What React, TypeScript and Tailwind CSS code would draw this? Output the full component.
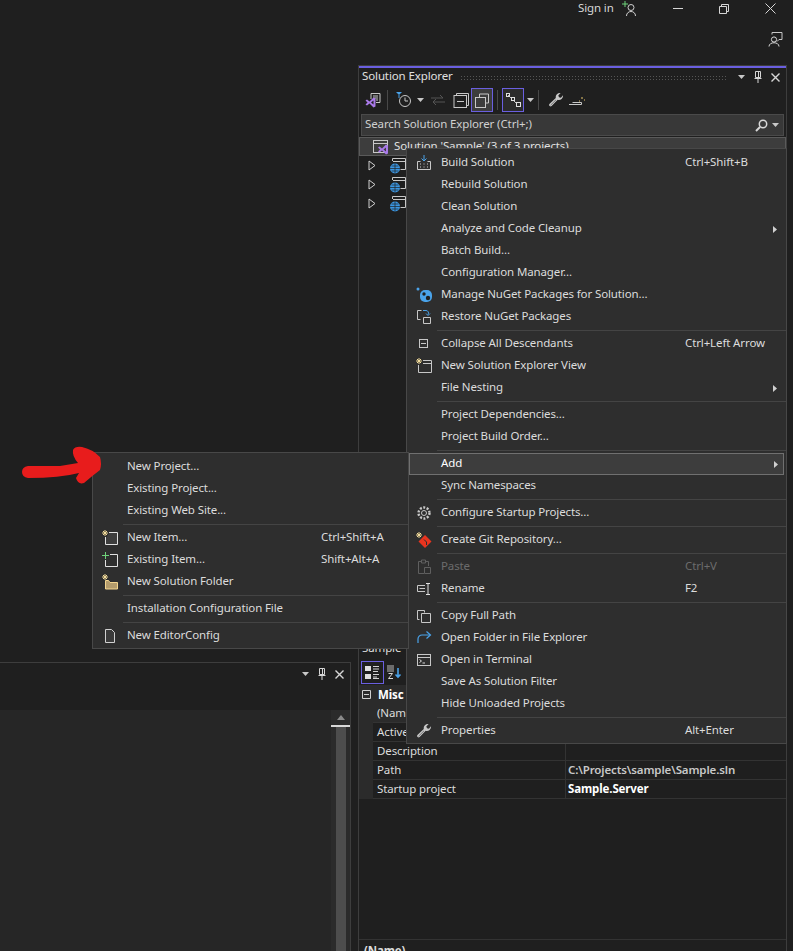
import type { ReactNode } from 'react';

const FONT = "font-['Noto_Sans','Open_Sans',sans-serif]";

type MenuItem =
  | { sep: true }
  | {
      sep?: false;
      label: string;
      shortcut?: string;
      icon?: ReactNode;
      arrow?: boolean;
      active?: boolean;
      disabled?: boolean;
    };

function Ic({ children, w = 16, h = 16 }: { children: ReactNode; w?: number; h?: number }) {
  return (
    <svg width={w} height={h} viewBox={`0 0 ${w} ${h}`} fill="none" className="shrink-0">
      {children}
    </svg>
  );
}

const Spark = ({ x = 3, y = 3 }: { x?: number; y?: number }) => (
  <g stroke="#f3dc9a" strokeWidth="1">
    <path d={`M${x - 3} ${y}h6M${x} ${y - 3}v6M${x - 2} ${y - 2}l4 4M${x + 2} ${y - 2}l-4 4`} />
  </g>
);

const VsLogo = ({ x = 0, y = 0 }: { x?: number; y?: number }) => (
  <path
    transform={`translate(${x} ${y})`}
    d="M0.5 3.5 L2 2.5 L4.5 4.5 L8.5 0.5 L10.5 1.5 V9.5 L8.5 10.5 L4.5 6.5 L2 8.5 L0.5 7.5 L2.5 5.5 Z M8.5 3.5 L6 5.5 L8.5 7.5 Z"
    fill="#a97ae8"
    fillRule="evenodd"
  />
);

const Globe = () => (
  <Ic w={16} h={16}>
    <path d="M2.5 3V0.5h13v11h-5" stroke="#c8c8c8" />
    <path d="M3 3.5h12" stroke="#c8c8c8" />
    <circle cx="5" cy="10.5" r="5" fill="#3b97e3" />
    <path d="M0 10.5h10M5 5.5v10M1.5 8h7M1.5 13h7" stroke="#1f1f1f" strokeWidth="0.7" />
  </Ic>
);

const Wrench = () => (
  <Ic>
    <path
      d="M15 3.2 A4.2 4.2 0 0 1 9.7 7.8 L3.6 14 A1.5 1.5 0 0 1 1.4 12 L7.8 6 A4.2 4.2 0 0 1 12.6 1 L10.3 3.4 L11 5.3 L12.9 5.8 Z"
      fill="#c8c8c8"
    />
    <path d="M2.6 13.2 L8 7.8" stroke="#777" />
  </Ic>
);

const Caret = ({ color = '#c8c8c8' }: { color?: string }) => (
  <svg width="7" height="4" viewBox="0 0 7 4" className="shrink-0">
    <path d="M0 0h7L3.5 4z" fill={color} />
  </svg>
);

const Pin = () => (
  <svg width="8" height="12" viewBox="0 0 8 12" fill="none" className="shrink-0">
    <path d="M1.5 0.5h5v6h-5z" stroke="#d6d6d6" />
    <path d="M0.5 7.5h7M4 7v5" stroke="#d6d6d6" />
    <path d="M4.5 1v5" stroke="#d6d6d6" />
  </svg>
);

const CloseX = ({ size = 9 }: { size?: number }) => (
  <svg width={size} height={size} viewBox="0 0 9 9" className="shrink-0">
    <path d="M0.5 0.5l8 8M8.5 0.5l-8 8" stroke="#d6d6d6" strokeWidth="1.4" />
  </svg>
);

const solutionMenu: MenuItem[] = [
  {
    label: 'Build Solution',
    shortcut: 'Ctrl+Shift+B',
    icon: (
      <Ic>
        <path d="M8 0v5" stroke="#4aa3ea" />
        <path d="M5.5 3.5L8 6l2.5-2.5" stroke="#4aa3ea" />
        <path d="M4.5 6.5H1.5v8h13v-8h-3" stroke="#c8c8c8" />
        <path d="M4 9h1M7.5 9h1M11 9h1M4 12h1M7.5 12h1M11 12h1" stroke="#c8c8c8" />
      </Ic>
    ),
  },
  { label: 'Rebuild Solution' },
  { label: 'Clean Solution' },
  { label: 'Analyze and Code Cleanup', arrow: true },
  { label: 'Batch Build...' },
  { label: 'Configuration Manager...' },
  {
    label: 'Manage NuGet Packages for Solution...',
    icon: (
      <Ic>
        <circle cx="2" cy="2" r="1.5" fill="#4aa3ea" />
        <rect x="4" y="3" width="12" height="12" rx="5" fill="#4aa3ea" />
        <circle cx="8" cy="7" r="1.7" fill="#1f1f1f" />
        <circle cx="12" cy="11" r="2.2" fill="#1f1f1f" />
      </Ic>
    ),
  },
  {
    label: 'Restore NuGet Packages',
    icon: (
      <Ic>
        <path d="M5.5 1.5h-4v9h3M7.5 8.5h7v6h-7z" stroke="#c8c8c8" />
        <path d="M7 1.5h3a2.5 2.5 0 0 1 2 4" stroke="#4aa3ea" />
        <path d="M10 4.5l2 2 2-2" stroke="#4aa3ea" />
      </Ic>
    ),
  },
  { sep: true },
  {
    label: 'Collapse All Descendants',
    shortcut: 'Ctrl+Left Arrow',
    icon: (
      <Ic>
        <rect x="3.5" y="3.5" width="8" height="8" stroke="#c8c8c8" />
        <path d="M5 7.5h5" stroke="#c8c8c8" />
      </Ic>
    ),
  },
  {
    label: 'New Solution Explorer View',
    icon: (
      <Ic>
        <Spark x={3} y={3} />
        <path d="M7 2.5h8.5v12h-13V7" stroke="#c8c8c8" />
        <path d="M7 5.5h8" stroke="#c8c8c8" />
      </Ic>
    ),
  },
  { label: 'File Nesting', arrow: true },
  { sep: true },
  { label: 'Project Dependencies...' },
  { label: 'Project Build Order...' },
  { sep: true },
  { label: 'Add', arrow: true, active: true },
  { label: 'Sync Namespaces' },
  { sep: true },
  {
    label: 'Configure Startup Projects...',
    icon: (
      <Ic>
        <circle cx="8" cy="8" r="2.5" stroke="#c8c8c8" />
        <circle cx="8" cy="8" r="5.5" stroke="#c8c8c8" strokeWidth="2.4" strokeDasharray="2 1.5" />
      </Ic>
    ),
  },
  { sep: true },
  {
    label: 'Create Git Repository...',
    icon: (
      <Ic>
        <Spark x={3} y={3} />
        <path d="M9 3l6.5 6.5L9 16 2.5 9.5z" fill="#e8341f" />
        <path d="M8 7.5l2.5 2.5v3" stroke="#2d2d2d" />
      </Ic>
    ),
  },
  { sep: true },
  {
    label: 'Paste',
    shortcut: 'Ctrl+V',
    disabled: true,
    icon: (
      <Ic>
        <path d="M6 2.5H2.5v12H8M10 2.5h2.5V7" stroke="#5f5f5f" />
        <path d="M5.5 1h4v3h-4z" stroke="#5f5f5f" />
        <path d="M8.5 8.5h6v6h-6z" stroke="#5f5f5f" />
      </Ic>
    ),
  },
  {
    label: 'Rename',
    shortcut: 'F2',
    icon: (
      <Ic>
        <path d="M9 4.5H1.5v6H9" stroke="#c8c8c8" />
        <path d="M3.5 7.5H9" stroke="#c8c8c8" />
        <path d="M10 2.5h4M10 13.5h4M12 2.5v11" stroke="#e0e0e0" />
      </Ic>
    ),
  },
  { sep: true },
  {
    label: 'Copy Full Path',
    icon: (
      <Ic>
        <path d="M3.5 11.5h-2v-9h7v2" stroke="#c8c8c8" />
        <path d="M5.5 5.5h9v9h-9z" stroke="#c8c8c8" />
      </Ic>
    ),
  },
  {
    label: 'Open Folder in File Explorer',
    icon: (
      <Ic>
        <path d="M2 13V9a4 4 0 0 1 4-4h8" stroke="#4aa3ea" strokeWidth="1.2" />
        <path d="M10.5 1.5L14.5 5l-4 3.5" stroke="#4aa3ea" strokeWidth="1.2" />
      </Ic>
    ),
  },
  {
    label: 'Open in Terminal',
    icon: (
      <Ic>
        <rect x="1.5" y="2.5" width="13" height="11" stroke="#c8c8c8" />
        <path d="M1.5 5.5h13" stroke="#c8c8c8" />
        <path d="M3.5 7.5l2 1.5-2 1.5M6.5 11h2.5" stroke="#d8d8d8" />
      </Ic>
    ),
  },
  { label: 'Save As Solution Filter' },
  { label: 'Hide Unloaded Projects' },
  { sep: true },
  { label: 'Properties', shortcut: 'Alt+Enter', icon: <Wrench /> },
];

const addMenu: MenuItem[] = [
  { label: 'New Project...' },
  { label: 'Existing Project...' },
  { label: 'Existing Web Site...' },
  { sep: true },
  {
    label: 'New Item...',
    shortcut: 'Ctrl+Shift+A',
    icon: (
      <Ic>
        <path d="M7 3h8v12H3.5V7.5h1" fill="#3d3d3d" />
        <Spark x={3} y={3} />
        <path d="M7 2.5h8.5v12h-12V7" stroke="#e0e0e0" />
      </Ic>
    ),
  },
  {
    label: 'Existing Item...',
    shortcut: 'Shift+Alt+A',
    icon: (
      <Ic>
        <path d="M0 3.5h7M3.5 0v7" stroke="#6fd37a" />
        <path d="M8 2.5h7.5v12h-12V8" stroke="#e0e0e0" />
      </Ic>
    ),
  },
  {
    label: 'New Solution Folder',
    icon: (
      <Ic>
        <Spark x={3} y={3} />
        <path d="M3.5 6.5h3l1.5 2h7.5v6.5h-12z" fill="#b39b6c" stroke="#f3d48f" />
      </Ic>
    ),
  },
  { sep: true },
  { label: 'Installation Configuration File' },
  { sep: true },
  {
    label: 'New EditorConfig',
    icon: (
      <Ic>
        <path d="M3.5 1.5h6l3 3v10h-9z" fill="#3a3a3a" stroke="#d0d0d0" />
      </Ic>
    ),
  },
];

function ContextMenu({ items, className, shortcutLeft }: { items: MenuItem[]; className: string; shortcutLeft: string }) {
  return (
    <div className={`absolute z-20 border border-[#484848] bg-[#2e2e2e] pt-[3px] ${className}`}>
      {items.map((item, i) =>
        item.sep ? (
          <div key={i} className="flex h-[5px] items-center pl-[30px]">
            <div className="h-px w-full bg-[#444444]" />
          </div>
        ) : (
          <div
            key={i}
            className={`relative flex h-[22px] items-center ${
              item.active ? 'mx-[2px] border border-[#707070] bg-[#3d3d3d] text-white' : ''
            } ${item.disabled ? 'text-[#6c6c6c]' : item.active ? '' : 'text-[#dcdcdc]'}`}
          >
            <div className={`flex w-[34px] shrink-0 justify-center ${item.active ? '-ml-[3px]' : ''}`}>{item.icon}</div>
            <span className="whitespace-nowrap pb-[2px]">{item.label}</span>
            {item.shortcut && <span className={`absolute whitespace-nowrap pb-[2px] ${shortcutLeft}`}>{item.shortcut}</span>}
            {item.arrow && (
              <svg
                width="4"
                height="7"
                viewBox="0 0 4 7"
                className={`absolute ${item.active ? 'right-[5px]' : 'right-[9px]'}`}
              >
                <path d="M0 0l4 3.5L0 7z" fill="#d0d0d0" />
              </svg>
            )}
          </div>
        ),
      )}
    </div>
  );
}

function ToolSep() {
  return <div className="mx-[4px] h-[20px] w-px bg-[#484848]" />;
}

function TreeRow() {
  return (
    <div className="flex h-[19px] items-center pl-[9px]">
      <svg width="8" height="11" viewBox="0 0 8 11" className="mr-[14px]">
        <path d="M1 1l6 4.5L1 10z" fill="none" stroke="#cfcfcf" />
      </svg>
      <Globe />
    </div>
  );
}

function PropRow({ name, value, strong, selected }: { name: string; value?: string; strong?: boolean; selected?: boolean }) {
  return (
    <div className="flex h-[19px] bg-[#2b2b2b] pl-[14px]">
      <div
        className={`flex w-[193px] shrink-0 items-center border-r border-b border-[#333333] pl-1 text-[#dcdcdc] ${
          selected ? '' : 'bg-[#1f1f1f]'
        }`}
      >
        {name}
      </div>
      <div
        className={`flex flex-1 items-center border-b border-[#333333] bg-[#1f1f1f] pl-[2px] ${
          strong ? 'font-bold text-white' : 'font-semibold text-[#c8c8c8]'
        }`}
      >
        {value}
      </div>
    </div>
  );
}

export default function App() {
  return (
    <div
      className={`relative flex h-[951px] w-[793px] flex-col overflow-hidden bg-[#1f1f1f] text-[11.5px] leading-none tracking-[-0.12px] ${FONT}`}
    >
      {/* window chrome */}
      <div className="h-[65px] shrink-0">
        <div className="flex h-[17px] items-center">
          <span className="ml-[578px] w-[37px] pb-[2px] text-[#d6d6d6]">Sign in</span>
          <div className="ml-[7px]">
            <Ic>
              <path d="M0 3h6M3 0v6" stroke="#6fd37a" />
              <circle cx="9" cy="6.5" r="3" stroke="#d0d0d0" />
              <path d="M4.5 15c0-6 9-6 9 0" stroke="#d0d0d0" />
            </Ic>
          </div>
          <div className="ml-[35px] h-px w-[10px] bg-[#d6d6d6]" />
          <div className="ml-[36px]">
            <svg width="10" height="10" viewBox="0 0 10 10" fill="none">
              <path d="M0.5 2.5h7v7h-7zM2.5 2V0.5h7v7H8" stroke="#d6d6d6" />
            </svg>
          </div>
          <div className="ml-[36px]">
            <svg width="11" height="11" viewBox="0 0 11 11">
              <path d="M0.5 0.5l10 10M10.5 0.5l-10 10" stroke="#d6d6d6" />
            </svg>
          </div>
        </div>
        <div className="mt-[15px] flex justify-end pr-[10px]">
          <Ic w={15} h={15}>
            <path d="M4 2.5V0.5h10v7h-3l-2 2" stroke="#c8c8c8" />
            <circle cx="6" cy="7.5" r="2.6" stroke="#d6d6d6" />
            <path d="M1 14.5c0-5 10-5 10 0" stroke="#d6d6d6" />
          </Ic>
        </div>
      </div>

      <div className="flex min-h-0 flex-1">
        {/* left side with the lower tool window */}
        <div className="flex w-[358px] shrink-0 flex-col">
          <div className="flex-1" />
          <div className="mr-[7px] flex h-[289px] flex-col border-t border-r border-[#3d3d3d]">
            <div className="flex h-[22px] items-center justify-end gap-[9px] pr-[6px]">
              <Caret />
              <Pin />
              <CloseX />
            </div>
            <div className="h-[25px]" />
            <div className="flex flex-1 justify-end bg-[#262626]">
              <div className="flex w-[19px] flex-col items-center bg-[#2b2b2b]">
                <div className="flex h-[15px] w-full items-center justify-center">
                  <svg width="8" height="5" viewBox="0 0 8 5">
                    <path d="M0 5h8L4 0z" fill="#8a8a8a" />
                  </svg>
                </div>
                <div className="h-[2px] w-full bg-[#d8d8d8]" />
                <div className="w-[10px] flex-1 bg-[#4d4d4d]" />
              </div>
            </div>
          </div>
        </div>

        {/* solution explorer and properties */}
        <div className="flex w-[429px] shrink-0 flex-col border-x border-[#3d3d3d]">
          <div className="flex h-[577px] shrink-0 flex-col border-t border-[#3d3d3d]">
            <div className="h-[2px] bg-[#6a5fe0]" />
            <div className="flex h-[18px] items-center pl-[3px] pr-[6px]">
              <span className="pb-[2px] text-[#e0e0e0]">Solution Explorer</span>
              <div className="mx-[7px] h-[5px] flex-1 bg-[radial-gradient(#555555_1px,transparent_1px)] bg-[length:3px_3px]" />
              <div className="mr-[9px] ml-[4px]">
                <Caret />
              </div>
              <div className="mr-[9px]">
                <Pin />
              </div>
              <CloseX />
            </div>
            <div className="flex h-[28px] items-center pl-[6px]">
              <Ic>
                <path d="M6 7V1.5h9v9h-4" stroke="#c8c8c8" />
                <path d="M8 4h5M8 6h5M11 8h2" stroke="#c8c8c8" />
                <VsLogo x={0} y={5} />
              </Ic>
              <div className="ml-[2px]">
                <ToolSep />
              </div>
              <div className="ml-[4px]">
                <Ic>
                  <path d="M0 0h6L3 3z" fill="#4aa3ea" />
                  <path d="M3 3v3" stroke="#4aa3ea" />
                  <circle cx="9" cy="9" r="5.5" stroke="#c8c8c8" />
                  <path d="M9 5.5V9h3" stroke="#c8c8c8" />
                </Ic>
              </div>
              <div className="ml-[5px]">
                <Caret />
              </div>
              <div className="ml-[7px]">
                <Ic w={14} h={14}>
                  <path d="M0 5h12M9 2l3 3M14 9H2M5 6L2 9M5 12L2 9" stroke="#555555" />
                </Ic>
              </div>
              <div className="ml-[8px]">
                <Ic>
                  <path d="M3.5 3.5V1.5h12v12h-2" stroke="#c8c8c8" />
                  <rect x="1" y="3.5" width="12.5" height="12" stroke="#c8c8c8" />
                  <path d="M4 9.5h7" stroke="#c8c8c8" />
                </Ic>
              </div>
              <div className="ml-[2px] flex h-[24px] w-[22px] items-center justify-center border border-[#6a5fe0] bg-[#3d3d3d]">
                <Ic w={14} h={15}>
                  <path d="M4.5 4V1h9v9H11" stroke="#c8c8c8" />
                  <rect x="0.5" y="4.5" width="10" height="10" stroke="#c8c8c8" />
                </Ic>
              </div>
              <ToolSep />
              <div className="flex h-[24px] w-[22px] items-center justify-center border border-[#6a5fe0] bg-[#2b2b2b]">
                <Ic w={15} h={14}>
                  <path d="M2 2l4 4M8 8l2 2" stroke="#c8c8c8" />
                  <rect x="0.5" y="0.5" width="3" height="3" stroke="#e0e0e0" />
                  <rect x="5.5" y="4.5" width="3" height="3" stroke="#e0e0e0" />
                  <rect x="10.5" y="9.5" width="4" height="4" stroke="#e0e0e0" />
                </Ic>
              </div>
              <div className="ml-[3px]">
                <Caret />
              </div>
              <ToolSep />
              <div className="ml-[5px]">
                <Wrench />
              </div>
              <div className="ml-[5px]">
                <Ic>
                  <path d="M3.5 10.5h9v2h-9M0 12.5h12" stroke="#c8c8c8" />
                  <path d="M13 5v2M10 9h1M15 8h1" stroke="#e7c76f" />
                </Ic>
              </div>
            </div>
            <div className="mx-[2px] flex h-[22px] items-center border border-[#4a4a4a] bg-[#383838] pr-[4px] pl-[3px] text-[#d0d0d0]">
              <span className="flex-1 pb-[2px]">Search Solution Explorer (Ctrl+;)</span>
              <Ic w={13} h={13}>
                <circle cx="8" cy="5" r="3.7" stroke="#d8d8d8" strokeWidth="1.5" />
                <path d="M5 8l-4 4" stroke="#d8d8d8" strokeWidth="2" />
              </Ic>
              <div className="ml-[4px]">
                <Caret />
              </div>
            </div>
            <div className="mt-[1px] flex h-[19px] items-center border border-[#5a5a5a] bg-[#3d3d3d] pl-[13px] text-[#e0e0e0]">
              <Ic>
                <rect x="0.5" y="1.5" width="14" height="12" stroke="#c8c8c8" />
                <path d="M0.5 4.5h14" stroke="#c8c8c8" />
                <VsLogo x={4.5} y={5} />
              </Ic>
              <span className="ml-[5px] pb-[2px]">Solution 'Sample' (3 of 3 projects)</span>
            </div>
            <div>
              <TreeRow />
              <TreeRow />
              <TreeRow />
            </div>
          </div>
          <div className="flex min-h-0 flex-1 flex-col">
            <div className="flex h-[17px] items-center pb-[6px] pl-[3px] text-[#dcdcdc]">Sample</div>
            <div className="flex h-[26px] items-center gap-[3px] pl-[2px]">
              <div className="flex h-[23px] w-[23px] items-center justify-center border border-[#6a5fe0]">
                <Ic w={15} h={13}>
                  <rect x="0" y="0" width="6" height="5" fill="#e0e0e0" />
                  <rect x="0" y="8" width="6" height="5" fill="#e0e0e0" />
                  <path d="M8 .5h6M8 3h6M8 5.5h5M8 8.5h6M8 11h4M8 12.5h6" stroke="#d0d0d0" />
                </Ic>
              </div>
              <Ic w={15} h={16}>
                <rect x="0" y="1" width="7" height="7" fill="#6c6c6c" />
                <path d="M1.5 14.5l4-5h-4M1.5 14.5h4.5" stroke="#d8d8d8" />
                <path d="M11 4v9M8.5 10.5L11 13l2.5-2.5" stroke="#4aa3ea" strokeWidth="1.6" />
              </Ic>
            </div>
            <div className="flex h-[19px] items-center bg-[#2b2b2b] pl-[3px] font-bold text-white">
              <svg width="9" height="9" viewBox="0 0 9 9" fill="none" className="mr-[7px]">
                <path d="M.5.5h8v8h-8zM2 4.5h5" stroke="#d0d0d0" />
              </svg>
              Misc
            </div>
            <PropRow name="(Name)" selected />
            <PropRow name="Active config" />
            <PropRow name="Description" />
            <PropRow name="Path" value="C:\Projects\sample\Sample.sln" />
            <PropRow name="Startup project" value="Sample.Server" strong />
            <div className="flex-1 border-b border-[#333333]" />
            <div className="h-[11px] overflow-hidden pt-[5px] pl-[5px] font-bold text-[#dcdcdc]">(Name)</div>
          </div>
        </div>
      </div>

      <ContextMenu items={solutionMenu} className="top-[148px] left-[406px] h-[596px] w-[381px]" shortcutLeft="left-[278px]" />
      <ContextMenu items={addMenu} className="top-[452px] left-[92px] h-[197px] w-[317px]" shortcutLeft="left-[228px]" />

      {/* annotation arrow */}
      <svg width="90" height="44" viewBox="0 0 90 44" className="absolute top-[445px] left-[20px] z-30">
        <path
          d="M8 21L40 21L58 18Q52 11 53 5Q55 1 62 2Q72 4 80 12Q82 19 80 25Q72 31 64 38Q58 40 56 33L59 28Q40 33 8 33Q2 32 2 27Q2 22 8 21Z"
          fill="#e81c1c"
        />
      </svg>
    </div>
  );
}
